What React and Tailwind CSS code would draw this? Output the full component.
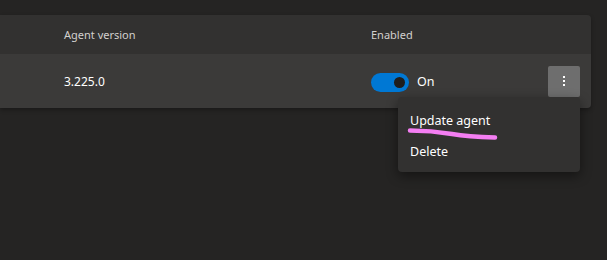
import { useState } from "react";

const font = { fontFamily: '"Segoe UI", "Noto Sans", "Open Sans", sans-serif' };

function Toggle({ on }) {
  return (
    <div className="flex items-center gap-[8px]">
      <div
        className={`flex h-[19px] w-[38px] items-center rounded-full px-[4px] ${
          on ? "justify-end bg-[#0078d4]" : "justify-start border border-[#c8c6c4]"
        }`}
      >
        <div className="h-[11px] w-[11px] rounded-full bg-[#1f1e1d]" />
      </div>
      <span className="text-[12.5px] text-white">{on ? "On" : "Off"}</span>
    </div>
  );
}

function MoreMenu() {
  return (
    <div className="absolute left-[398px] top-[97px] w-[182px] rounded-[4px] bg-[#323130] pb-[4px] pt-[9px] shadow-[0_4px_12px_rgba(0,0,0,0.45)]">
      <div className="flex h-[31px] items-center pl-[12px] text-[12.5px] text-white">
        Update agent
      </div>
      <div className="flex h-[31px] items-center pl-[12px] text-[12.5px] text-white">
        Delete
      </div>
    </div>
  );
}

export default function App() {
  const [enabled] = useState(true);

  return (
    <div className="relative h-[260px] w-full overflow-hidden bg-[#252423]" style={font}>
      <div className="pt-[15px]">
        <div className="w-[591px] overflow-hidden rounded-r-[4px] shadow-[0_2px_4px_rgba(0,0,0,0.3)]">
          {/* header */}
          <div className="flex h-[39px] items-center bg-[#323130] pl-[64px] pt-[2px] text-[11px] text-[#d2d0ce]">
            <div className="w-[307px]">Agent version</div>
            <div>Enabled</div>
          </div>
          {/* row */}
          <div className="flex h-[54px] items-center bg-[#3b3a39] pl-[64px] pr-[11px] pt-[2px]">
            <div className="w-[307px] text-[12px] text-white">3.225.0</div>
            <Toggle on={enabled} />
            <button className="ml-auto mt-[-2px] flex h-[31px] w-[32px] flex-col items-center justify-center gap-[2px] rounded-[2px] bg-[#6e6e6e]">
              <span className="h-[2px] w-[2px] bg-white" />
              <span className="h-[2px] w-[2px] bg-white" />
              <span className="h-[2px] w-[2px] bg-white" />
            </button>
          </div>
        </div>
      </div>

      <MoreMenu />

      {/* highlighter mark */}
      <svg className="pointer-events-none absolute left-0 top-0" width="607" height="260">
        <path
          d="M410 130.5 C 425 130.5, 440 132, 452 134 S 480 137, 495 137.5"
          fill="none"
          stroke="#f47ef2"
          strokeWidth="4.5"
          strokeLinecap="round"
        />
      </svg>
    </div>
  );
}
